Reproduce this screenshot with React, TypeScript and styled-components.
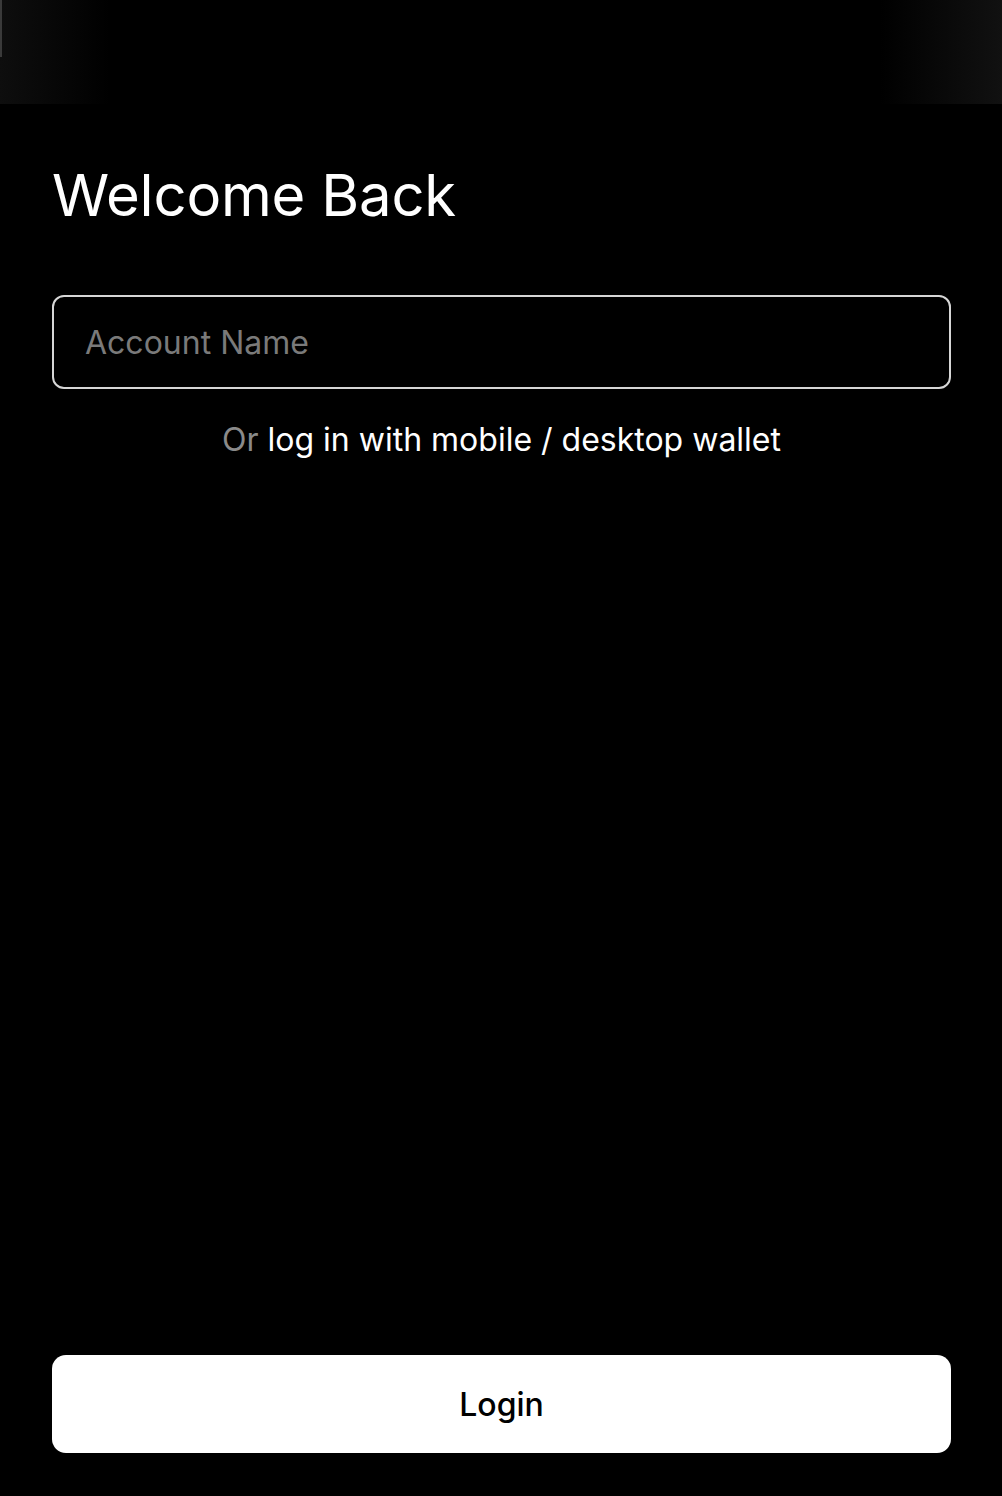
import React from "react";
import styled, { createGlobalStyle } from "styled-components";

const Global = createGlobalStyle`
  html, body { margin: 0; padding: 0; background: #000; }
  body { font-family: Inter, "Noto Sans", sans-serif; color: #fff; }
  * { box-sizing: border-box; }
`;

const Page = styled.div`
  width: 1002px;
  height: 1496px;
  display: flex;
  flex-direction: column;
  background: #000;
`;

const TopBar = styled.header`
  position: relative;
  height: 104px;
  flex: none;
  background: linear-gradient(
    to right,
    #0e0e0e 0px,
    #000 110px,
    #000 880px,
    #111 1002px
  );
`;

const EdgeMark = styled.span`
  position: absolute;
  left: 0;
  top: 0;
  width: 2px;
  height: 57px;
  background: #3a3a3a;
`;

const Main = styled.main`
  flex: 1;
  display: flex;
  flex-direction: column;
  padding: 55px 51px 43px 52px;
`;

const Title = styled.h1`
  margin: 0;
  font-size: 58px;
  font-weight: 400;
  line-height: 72px;
  letter-spacing: -0.2px;
`;

const Field = styled.input`
  margin-top: 64px;
  width: 100%;
  height: 94px;
  border: 2px solid #d6d6d6;
  border-radius: 12px;
  background: #000;
  color: #fff;
  font-family: inherit;
  font-size: 32px;
  padding: 0 31px;
  outline: none;
  &::placeholder { color: #7a7a7a; }
`;

const AltLine = styled.p`
  margin: 29px 0 0;
  text-align: center;
  font-size: 32px;
  line-height: 44px;
  color: #fff;
`;

const Muted = styled.span`
  color: #8a8a8a;
`;

const Spacer = styled.div`
  flex: 1;
`;

const LoginButton = styled.button`
  height: 98px;
  width: 100%;
  border: none;
  border-radius: 14px;
  background: #fff;
  color: #000;
  font-family: inherit;
  font-size: 32px;
  font-weight: 500;
  cursor: pointer;
`;

export default function App() {
  return (
    <>
      <Global />
      <Page>
        <TopBar>
          <EdgeMark />
        </TopBar>
        <Main>
          <Title>Welcome Back</Title>
          <Field placeholder="Account Name" />
          <AltLine>
            <Muted>Or</Muted> log in with mobile / desktop wallet
          </AltLine>
          <Spacer />
          <LoginButton>Login</LoginButton>
        </Main>
      </Page>
    </>
  );
}
